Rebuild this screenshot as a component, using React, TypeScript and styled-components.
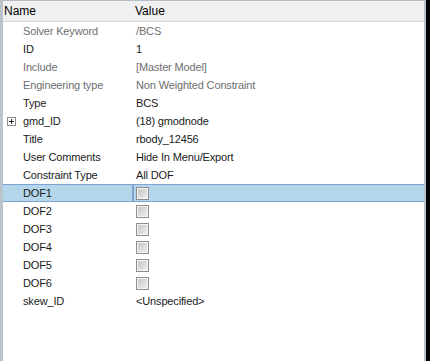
import styled, { createGlobalStyle } from 'styled-components';

const GlobalStyle = createGlobalStyle`
  html, body {
    margin: 0;
    padding: 0;
    background: #000;
  }
  body {
    font-family: 'Liberation Sans', Arial, sans-serif;
  }
`;

type Row = {
  name: string;
  value?: string;
  muted?: boolean;
  expandable?: boolean;
  checkbox?: boolean;
  selected?: boolean;
};

const ROWS: Row[] = [
  { name: 'Solver Keyword', value: '/BCS', muted: true },
  { name: 'ID', value: '1' },
  { name: 'Include', value: '[Master Model]', muted: true },
  { name: 'Engineering type', value: 'Non Weighted Constraint', muted: true },
  { name: 'Type', value: 'BCS' },
  { name: 'gmd_ID', value: '(18) gmodnode', expandable: true },
  { name: 'Title', value: 'rbody_12456' },
  { name: 'User Comments', value: 'Hide In Menu/Export' },
  { name: 'Constraint Type', value: 'All DOF' },
  { name: 'DOF1', checkbox: true, selected: true },
  { name: 'DOF2', checkbox: true },
  { name: 'DOF3', checkbox: true },
  { name: 'DOF4', checkbox: true },
  { name: 'DOF5', checkbox: true },
  { name: 'DOF6', checkbox: true },
  { name: 'skew_ID', value: '<Unspecified>' },
];

const PlusIcon = () => (
  <svg width="9" height="9" viewBox="0 0 9 9">
    <rect x="0.5" y="0.5" width="8" height="8" fill="#fff" stroke="#8c8c8c" />
    <path d="M2 4.5h5M4.5 2v5" stroke="#2b2b2b" strokeWidth="1" />
  </svg>
);

export default function App() {
  return (
    <>
      <GlobalStyle />
      <Frame>
        <Panel>
          <Header>
            <HeadCell $width={130}>Name</HeadCell>
            <HeadCell>Value</HeadCell>
          </Header>
          <Body>
            {ROWS.map((row) => (
              <RowLine key={row.name} $selected={row.selected}>
                <NameCell $muted={row.muted}>
                  <Expander>{row.expandable && <PlusIcon />}</Expander>
                  {row.name}
                </NameCell>
                <ValueCell $muted={row.muted} $selected={row.selected}>
                  {row.checkbox ? <CheckBox /> : row.value}
                </ValueCell>
              </RowLine>
            ))}
          </Body>
        </Panel>
      </Frame>
    </>
  );
}

// ROOT
const Frame = styled.div`
  width: 430px;
  height: 361px;
  display: flex;
  background: #000;
`;

const Panel = styled.div`
  width: 421px;
  height: 360px;
  background: #fff;
  border-top: 1px solid #b4bec8;
  border-left: 3px solid #bac4cd;
  border-right: 2px solid #b6c0ca;
  display: flex;
  flex-direction: column;
`;

// HEADER
const Header = styled.div`
  height: 20px;
  display: flex;
  align-items: center;
  background: #f0f0f0;
  border-bottom: 1px solid #d5d5d5;
  font-size: 12px;
  color: #000;
`;

const HeadCell = styled.div<{ $width?: number }>`
  width: ${(p) => (p.$width ? `${p.$width}px` : 'auto')};
  padding-left: 1px;
  flex-shrink: 0;
`;

// ROWS
const Body = styled.div`
  display: flex;
  flex-direction: column;
`;

const RowLine = styled.div<{ $selected?: boolean }>`
  height: 18px;
  display: flex;
  align-items: center;
  box-sizing: border-box;
  font-size: 11px;
  letter-spacing: -0.15px;
  background: ${(p) => (p.$selected ? '#b4d6ea' : 'transparent')};
  border-top: 1px solid ${(p) => (p.$selected ? '#7ea3cf' : 'transparent')};
  border-bottom: 1px solid ${(p) => (p.$selected ? '#7ea3cf' : 'transparent')};
`;

const NameCell = styled.div<{ $muted?: boolean }>`
  width: 129px;
  display: flex;
  align-items: center;
  color: ${(p) => (p.$muted ? '#6e6e6e' : '#1a1a1a')};
  white-space: nowrap;
`;

const Expander = styled.span`
  width: 20px;
  display: flex;
  align-items: center;
  padding-left: 4px;
  box-sizing: border-box;
  flex-shrink: 0;
`;

const ValueCell = styled.div<{ $muted?: boolean; $selected?: boolean }>`
  flex: 1;
  height: 100%;
  display: flex;
  align-items: center;
  padding-left: 2px;
  border-left: 2px solid ${(p) => (p.$selected ? '#7ea3cf' : 'transparent')};
  color: ${(p) => (p.$muted ? '#6e6e6e' : '#1a1a1a')};
  white-space: nowrap;
`;

const CheckBox = styled.span`
  width: 11px;
  height: 11px;
  border: 1px solid #8e8e8e;
  box-shadow: inset 0 0 0 1px #f4f4f4;
  background: linear-gradient(135deg, #c4c4c4, #f0f0f0);
`;
